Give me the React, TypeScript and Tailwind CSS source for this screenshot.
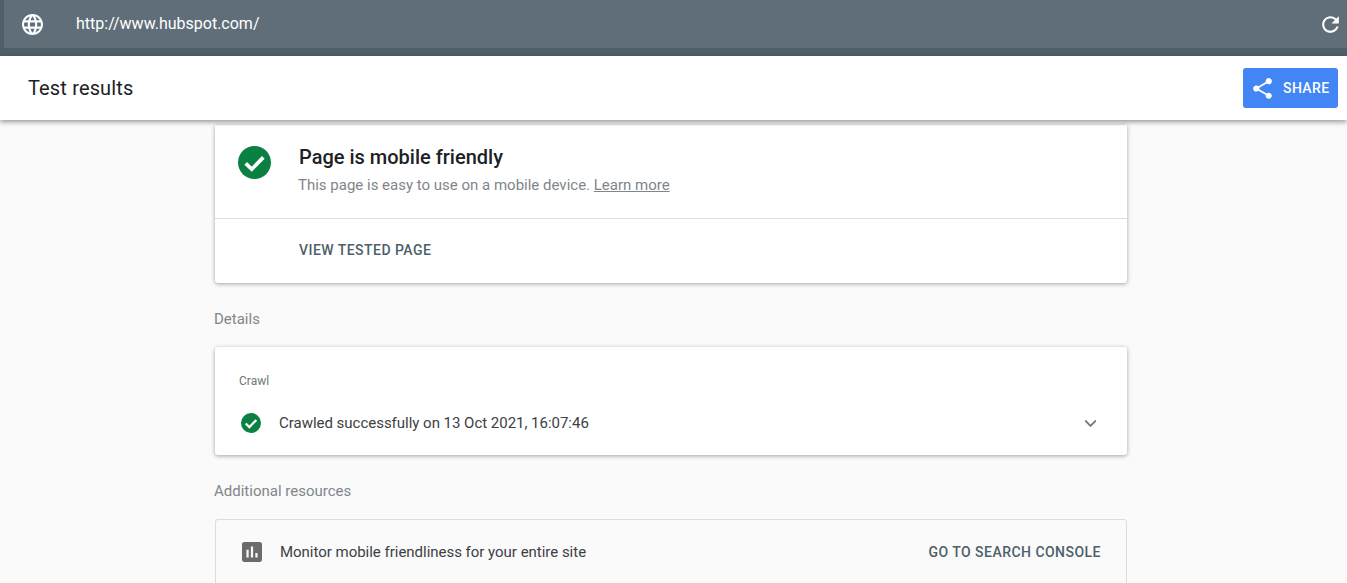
import { ChevronDown } from "lucide-react";

function CheckBadge({ size }: { size: number }) {
  return (
    <svg width={size} height={size} viewBox="0 0 24 24" className="block shrink-0">
      <circle cx="12" cy="12" r="12" fill="#0b8043" />
      <path d="M5.6 12.6l4.4 4.3 8.4-8.6" fill="none" stroke="#fff" strokeWidth="2.7" />
    </svg>
  );
}

function SectionLabel({ children }: { children: string }) {
  return <div className="-ml-px text-[15px] leading-5 text-[#80868b]">{children}</div>;
}

export default function App() {
  return (
    <div className="relative h-[583px] w-[1347px] overflow-hidden bg-[#fafafa] font-['Roboto',sans-serif]">
      <div className="h-14 bg-[#4f5f6a] pl-1 pb-2">
        <div className="flex h-12 items-center bg-[#5f6e79] pl-[18px] pr-[4px]">
          <svg width="21" height="21" viewBox="2 2 20 20" fill="#fff" className="shrink-0">
            <path d="M11.99 2C6.47 2 2 6.48 2 12s4.47 10 9.99 10C17.52 22 22 17.52 22 12S17.52 2 11.99 2zm6.93 6h-2.95c-.32-1.25-.78-2.45-1.38-3.56 1.84.63 3.37 1.91 4.33 3.56zM12 4.04c.83 1.2 1.48 2.53 1.91 3.96h-3.82c.43-1.43 1.08-2.76 1.91-3.96zM4.26 14C4.1 13.36 4 12.69 4 12s.1-1.36.26-2h3.38c-.08.66-.14 1.32-.14 2 0 .68.06 1.34.14 2H4.26zm.82 2h2.95c.32 1.25.78 2.45 1.38 3.56-1.84-.63-3.37-1.9-4.33-3.56zm2.95-8H5.08c.96-1.66 2.49-2.93 4.33-3.56C8.81 5.55 8.35 6.75 8.03 8zM12 19.96c-.83-1.2-1.48-2.53-1.91-3.96h3.82c-.43 1.43-1.08 2.76-1.91 3.96zM14.34 14H9.66c-.09-.66-.16-1.32-.16-2 0-.68.07-1.35.16-2h4.68c.09.65.16 1.32.16 2 0 .68-.07 1.34-.16 2zm.25 5.56c.6-1.11 1.06-2.31 1.38-3.56h2.95c-.96 1.65-2.49 2.93-4.33 3.56zM16.36 14c.08-.66.14-1.32.14-2 0-.68-.06-1.34-.14-2h3.38c.16.64.26 1.31.26 2s-.1 1.36-.26 2h-3.38z" />
          </svg>
          <div className="ml-[33px] flex-1 text-base leading-6 text-white">http://www.hubspot.com/</div>
          <svg width="25" height="25" viewBox="0 0 24 24" fill="#fff" className="shrink-0">
            <path d="M17.65 6.35C16.2 4.9 14.21 4 12 4c-4.42 0-7.99 3.58-7.99 8s3.57 8 7.99 8c3.73 0 6.84-2.55 7.73-6h-2.08c-.82 2.33-3.04 4-5.65 4-3.31 0-6-2.69-6-6s2.69-6 6-6c1.66 0 3.14.69 4.22 1.78L13 11h7V4l-2.35 2.35z" />
          </svg>
        </div>
      </div>

      <header className="relative z-10 flex h-16 items-center justify-between bg-white pl-7 pr-[9px] shadow-[0_2px_5px_rgba(0,0,0,0.4)]">
        <h1 className="text-xl font-normal leading-7 tracking-[0.15px] text-[#202124]">Test results</h1>
        <button className="flex h-10 w-[95px] items-center rounded-[3px] bg-[#4285f4] pl-[7px] text-sm font-medium tracking-[0.4px] text-white">
          <svg width="25" height="25" viewBox="0 0 24 24" fill="#fff" className="shrink-0">
            <path d="M18 16.08c-.76 0-1.44.3-1.96.77L8.91 12.7c.05-.23.09-.46.09-.7s-.04-.47-.09-.7l7.05-4.11c.54.5 1.25.81 2.04.81 1.66 0 3-1.34 3-3s-1.34-3-3-3-3 1.34-3 3c0 .24.04.47.09.7L8.04 9.81C7.5 9.31 6.79 9 6 9c-1.66 0-3 1.34-3 3s1.34 3 3 3c.79 0 1.5-.31 2.04-.81l7.12 4.16c-.05.21-.08.43-.08.65 0 1.61 1.31 2.92 2.92 2.92 1.61 0 2.92-1.31 2.92-2.92s-1.31-2.92-2.92-2.92z" />
          </svg>
          <span className="ml-2">SHARE</span>
        </button>
      </header>

      <main className="ml-[215px] w-[912px] pt-[5px]">
        <section className="rounded-b-[3px] bg-white shadow-[0_1px_4px_rgba(0,0,0,0.35)]">
          <div className="flex h-[94px] border-b border-[#dadce0]">
            <div className="ml-[23px] mt-[21px]">
              <CheckBadge size={33} />
            </div>
            <div className="ml-[27px] pt-[19px]">
              <div className="pl-px text-xl font-medium leading-[26px] text-[#202124]">Page is mobile friendly</div>
              <div className="mt-[5px] text-[15px] leading-5 text-[#80868b]">
                This page is easy to use on a mobile device. <span className="underline">Learn more</span>
              </div>
            </div>
          </div>
          <div className="flex h-[64px] items-center pb-[2px] pl-[84px] text-sm font-medium tracking-[0.47px] text-[#4d5f69]">
            VIEW TESTED PAGE
          </div>
        </section>

        <div className="mt-[26px]">
          <SectionLabel>Details</SectionLabel>
        </div>

        <section className="mt-[18px] h-[108px] rounded-[3px] bg-white px-[24px] pt-[26px] shadow-[0_1px_4px_rgba(0,0,0,0.35)]">
          <div className="text-xs leading-4 text-[#757575]">Crawl</div>
          <div className="mt-[24px] flex h-5 items-center">
            <div className="ml-[2px]">
              <CheckBadge size={20} />
            </div>
            <div className="ml-[18px] flex-1 text-[15px] leading-5 tracking-[-0.02px] text-[#3c4043]">
              Crawled successfully on 13 Oct 2021, 16:07:46
            </div>
            <ChevronDown size={19} strokeWidth={2.4} className="mr-[3px] text-[#757575]" />
          </div>
        </section>

        <div className="mt-[26px]">
          <SectionLabel>Additional resources</SectionLabel>
        </div>

        <section className="mt-[18px] flex h-[66px] items-start rounded-t-[3px] border border-[#dadce0] pl-[26px] pr-[25px] pt-[22px]">
          <svg width="20" height="20" viewBox="3 3 18 18" fill="#6b6b6b" className="shrink-0">
            <path d="M19 3H5c-1.1 0-2 .9-2 2v14c0 1.1.9 2 2 2h14c1.1 0 2-.9 2-2V5c0-1.1-.9-2-2-2zM9 17H7v-7h2v7zm4 0h-2V7h2v10zm4 0h-2v-4h2v4z" />
          </svg>
          <div className="ml-[18px] flex-1 text-[15px] leading-5 tracking-[-0.02px] text-[#3c4043]">Monitor mobile friendliness for your entire site</div>
          <div className="text-sm font-medium leading-5 tracking-[0.47px] text-[#4d5f69]">GO TO SEARCH CONSOLE</div>
        </section>
      </main>
    </div>
  );
}
